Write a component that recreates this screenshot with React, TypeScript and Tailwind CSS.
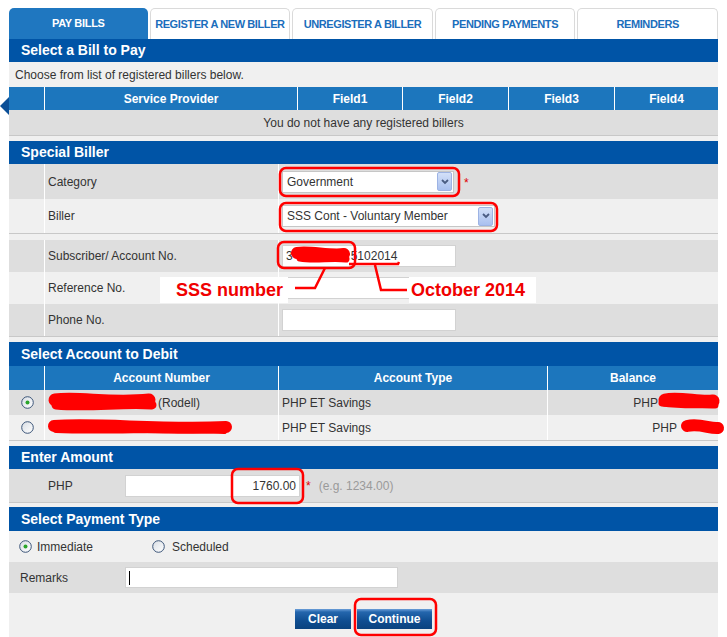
import type { ReactNode } from 'react';

const tabs = ['PAY BILLS', 'REGISTER A NEW BILLER', 'UNREGISTER A BILLER', 'PENDING PAYMENTS', 'REMINDERS'];

function SectionHeader({ title, h = 'h-[23px]' }: { title: string; h?: string }) {
  return (
    <div className={`${h} bg-[#0054a6] pl-[12px] flex items-center text-[14px] font-bold text-white`}>
      {title}
    </div>
  );
}

function Spacer({ h }: { h: string }) {
  return <div className={`${h} bg-[#f0f0f0] border-t border-[#c8c8c8]`} />;
}

function Radio({ checked }: { checked?: boolean }) {
  return (
    <svg width="13" height="13" viewBox="0 0 13 13" className="shrink-0">
      <defs>
        <linearGradient id="rg" x1="0" y1="0" x2="1" y2="1">
          <stop offset="0" stopColor="#d8dde4" />
          <stop offset="1" stopColor="#ffffff" />
        </linearGradient>
      </defs>
      <circle cx="6.5" cy="6.5" r="5.8" fill="url(#rg)" stroke="#3c5578" strokeWidth="1" />
      {checked && <circle cx="6.5" cy="6.5" r="2" fill="#2aa52a" />}
    </svg>
  );
}

function SelectBox({ value, className }: { value: string; className: string }) {
  return (
    <div className={`${className} h-[22px] bg-white border border-[#c6c6c6] flex items-center justify-between pl-[4px] pr-px`}>
      <span>{value}</span>
      <div className="w-[15px] h-[19px] rounded-[2px] border border-[#9db3e4] bg-[linear-gradient(to_bottom,#d3e0f8,#a9c0ef)] flex items-center justify-center">
        <svg width="8" height="6" viewBox="0 0 8 6">
          <path d="M1 1 L4 4 L7 1" stroke="#4a5c82" strokeWidth="1.8" fill="none" />
        </svg>
      </div>
    </div>
  );
}

function TextBox({ className, children }: { className: string; children?: ReactNode }) {
  return (
    <div className={`${className} h-[22px] bg-white border border-[#d2d2d2] flex items-center px-[3px]`}>{children}</div>
  );
}

function FormRow({ label, bg, h, children }: { label: string; bg: string; h: string; children?: ReactNode }) {
  return (
    <div className={`grid grid-cols-[35px_234px_1fr] ${h} ${bg}`}>
      <div />
      <div className="border-l border-white flex items-center pl-[3px]">{label}</div>
      <div className="border-l border-white flex items-center pl-[3px]">{children}</div>
    </div>
  );
}

function Annotations() {
  const red = '#ff0000';
  return (
    <svg className="absolute left-0 top-0 pointer-events-none" width="727" height="637" viewBox="0 0 727 637">
      {/* scribbles over private numbers */}
      <g stroke={red} strokeLinecap="round" strokeLinejoin="round" fill="none">
        <path d="M297 253 C310 251 330 256 344 254" strokeWidth="12" />
        <path d="M300 258 C315 261 330 257 346 259" strokeWidth="7" />
        <path d="M55 400 C80 397 110 404 149 400" strokeWidth="13" />
        <path d="M56 405 C90 408 120 403 152 405" strokeWidth="9" />
        <path d="M54 426 C100 423 160 430 226 427" strokeWidth="12" />
        <path d="M56 430 C110 432 170 428 224 431" strokeWidth="6" />
        <path d="M665 400 C680 397 700 403 713 401" strokeWidth="13" />
        <path d="M662 403 C685 406 700 404 715 405" strokeWidth="7" />
        <path d="M687 426 C700 423 710 429 718 428" strokeWidth="12" />
      </g>
      {/* circled fields */}
      <g stroke={red} strokeWidth="2.5" fill="none">
        <rect x="280" y="168" width="179" height="28" rx="6" />
        <rect x="280" y="203" width="217" height="28" rx="6" />
        <rect x="278" y="242" width="77" height="26" rx="6" />
        <rect x="232" y="469" width="71" height="34" rx="6" />
        <rect x="355" y="599" width="81" height="36" rx="6" />
        <path d="M349 264 L398 264 L399 262" />
        <path d="M325 268 L315 288 L295 288" />
        <path d="M375 265 L381 290 L407 290" />
      </g>
    </svg>
  );
}

export default function App() {
  return (
    <div className="relative w-[727px] h-[637px] overflow-hidden bg-white font-['Liberation_Sans',Arial,sans-serif] text-[12px] text-[#333]">
      <div className="ml-[9px] w-[709px] pt-[8px]">
        {/* tabs */}
        <div className="flex gap-[2px] h-[31px]">
          {tabs.map((t, i) => (
            <div
              key={t}
              className={
                i === 0
                  ? 'flex-1 rounded-t-[5px] bg-[#1f77c0] text-white flex items-center justify-center text-[11px] font-bold tracking-[-0.3px]'
                  : 'flex-1 rounded-t-[5px] bg-white border border-b-0 border-[#dadada] text-[#1b6ebc] flex items-center justify-center text-[11px] font-bold tracking-[-0.4px]'
              }
            >
              {t}
            </div>
          ))}
        </div>

        {/* Select a Bill to Pay */}
        <SectionHeader title="Select a Bill to Pay" />
        <div className="h-[25px] bg-[#f0f0f0] flex items-center pl-[6px]">Choose from list of registered billers below.</div>
        <div className="grid grid-cols-[35px_253px_105px_106px_106px_1fr] h-[23px] bg-[#1c76bd] text-white font-bold">
          <div />
          {['Service Provider', 'Field1', 'Field2', 'Field3', 'Field4'].map((c) => (
            <div key={c} className="border-l border-white flex items-center justify-center">
              {c}
            </div>
          ))}
        </div>
        <div className="h-[25px] bg-[#dedede] flex items-center justify-center">You do not have any registered billers</div>
        <Spacer h="h-[6px]" />

        {/* Special Biller */}
        <SectionHeader title="Special Biller" />
        <FormRow label="Category" bg="bg-[#dedede]" h="h-[35px]">
          <SelectBox value="Government" className="w-[172px]" />
          <span className="ml-[10px] text-[#e00000] self-start mt-[10px]">*</span>
        </FormRow>
        <FormRow label="Biller" bg="bg-[#f0f0f0]" h="h-[34px]">
          <SelectBox value="SSS Cont - Voluntary Member" className="w-[213px]" />
        </FormRow>
        <Spacer h="h-[7px]" />
        <FormRow label="Subscriber/ Account No." bg="bg-[#dedede]" h="h-[32px]">
          <TextBox className="w-[174px]">
            3<span className="inline-block w-[58px]" />5102014
          </TextBox>
        </FormRow>
        <FormRow label="Reference No." bg="bg-[#f0f0f0]" h="h-[32px]">
          <TextBox className="w-[174px]" />
        </FormRow>
        <FormRow label="Phone No." bg="bg-[#dedede]" h="h-[32px]">
          <TextBox className="w-[174px]" />
        </FormRow>
        <Spacer h="h-[6px]" />

        {/* Select Account to Debit */}
        <SectionHeader title="Select Account to Debit" h="h-[24px]" />
        <div className="grid grid-cols-[35px_234px_269px_1fr] h-[24px] bg-[#1c76bd] text-white font-bold">
          <div />
          {['Account Number', 'Account Type', 'Balance'].map((c) => (
            <div key={c} className="border-l border-white flex items-center justify-center">
              {c}
            </div>
          ))}
        </div>
        <div className="grid grid-cols-[35px_234px_269px_1fr] h-[25px] bg-[#dedede]">
          <div className="flex items-center justify-center pl-px">
            <Radio checked />
          </div>
          <div className="border-l border-white flex items-center pl-[3px]">
            <span className="inline-block w-[110px]" />
            (Rodell)
          </div>
          <div className="border-l border-white flex items-center pl-[3px]">PHP ET Savings</div>
          <div className="border-l border-white flex items-center justify-end">
            PHP<span className="inline-block w-[60px]" />
          </div>
        </div>
        <div className="grid grid-cols-[35px_234px_269px_1fr] h-[25px] bg-[#f0f0f0]">
          <div className="flex items-center justify-center pl-px">
            <Radio />
          </div>
          <div className="border-l border-white" />
          <div className="border-l border-white flex items-center pl-[3px]">PHP ET Savings</div>
          <div className="border-l border-white flex items-center justify-end">
            PHP<span className="inline-block w-[41px]" />
          </div>
        </div>
        <Spacer h="h-[6px]" />

        {/* Enter Amount */}
        <SectionHeader title="Enter Amount" />
        <div className="h-[33px] bg-[#dedede] flex items-center pl-[39px]">
          <span className="w-[77px]">PHP</span>
          <TextBox className="w-[175px] justify-end">1760.00</TextBox>
          <span className="ml-[6px] text-[#e00000] self-start mt-[8px]">*</span>
          <span className="ml-[8px] text-[#9a9a9a]">(e.g. 1234.00)</span>
        </div>
        <Spacer h="h-[5px]" />

        {/* Select Payment Type */}
        <SectionHeader title="Select Payment Type" h="h-[24px]" />
        <div className="h-[31px] bg-[#f0f0f0] flex items-center pl-[10px]">
          <div className="w-[133px] flex items-center gap-[5px]">
            <Radio checked />
            Immediate
          </div>
          <div className="flex items-center gap-[7px]">
            <Radio />
            Scheduled
          </div>
        </div>
        <div className="h-[31px] bg-[#dedede] flex items-center pl-[11px]">
          <span className="w-[105px]">Remarks</span>
          <div className="w-[273px] h-[21px] bg-white border border-[#d2d2d2] flex items-center pl-[3px]">
            <span className="w-px h-[14px] bg-black" />
          </div>
        </div>
        <div className="h-[44px] bg-[#f0f0f0] flex justify-center gap-[6px] pt-[16px]">
          <button className="w-[56px] h-[20px] bg-[linear-gradient(to_bottom,#6c9fd9_0%,#2466ad_15%,#0f4d90_60%,#0a437f_100%)] text-white font-bold text-[12px]">
            Clear
          </button>
          <button className="w-[75px] h-[20px] bg-[linear-gradient(to_bottom,#6c9fd9_0%,#2466ad_15%,#0f4d90_60%,#0a437f_100%)] text-white font-bold text-[12px]">
            Continue
          </button>
        </div>
      </div>

      {/* left pointer */}
      <svg className="absolute left-0 top-[97px]" width="9" height="18" viewBox="0 0 9 18">
        <polygon points="9,0 0,9 9,18" fill="#0b4f97" />
      </svg>

      <Annotations />

      {/* callout labels */}
      <div className="absolute left-[160px] top-[277px] w-[128px] h-[26px] bg-white flex items-center pl-[16px] text-[18px] font-bold text-[#f00000]">
        SSS number
      </div>
      <div className="absolute left-[409px] top-[277px] w-[127px] h-[26px] bg-white flex items-center pl-[2px] text-[18px] font-bold text-[#f00000]">
        October 2014
      </div>
    </div>
  );
}
